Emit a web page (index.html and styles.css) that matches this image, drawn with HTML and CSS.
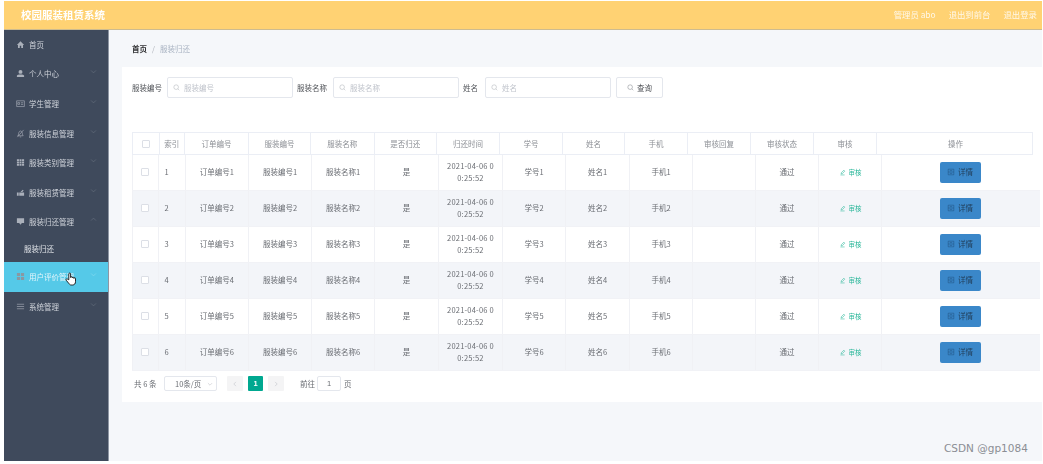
FILE: index.html
```html
<!DOCTYPE html>
<html lang="zh">
<head>
<meta charset="utf-8">
<title>校园服装租赁系统</title>
<link rel="stylesheet" href="styles.css">
</head>
<body>
<div class="app">
  <header class="topbar">
    <div class="brand">校园服装租赁系统</div>
    <div class="userlinks"><span>管理员 abo</span><span>退出到前台</span><span>退出登录</span></div>
  </header>
  <div class="shell">
    <nav class="sidebar">
      <div class="nav-item"><svg class="ni" viewBox="0 0 10 10"><path d="M5 1.5 1 5.5h1.2V9h2V6.5h1.6V9h2V5.500H9z"/></svg><span>首页</span></div>
      <div class="nav-item"><svg class="ni" viewBox="0 0 10 10"><circle cx="5" cy="3.200" r="2.200"/><path d="M1 9V7.600C1 6.500 3 6 5 6s4 .5 4 1.600V9z"/></svg><span>个人中心</span><svg class="chev" viewBox="0 0 10 10"><path d="M1.500 3.500 5 7l3.500-3.500"/></svg></div>
      <div class="nav-item"><svg class="ni line" viewBox="0 0 10 10"><path d="M.7 2h8.600v6.400H.7zM2 4h2v2H2zM5.500 4.200h2.500M5.500 6h2.500"/></svg><span>学生管理</span><svg class="chev" viewBox="0 0 10 10"><path d="M1.500 3.500 5 7l3.500-3.500"/></svg></div>
      <div class="nav-item"><svg class="ni line" viewBox="0 0 10 10"><path d="M2 7.500c1-1 .8-2.500 1.200-3.600C3.600 2.800 4.300 2.200 5 2.200s1.400.6 1.800 1.700C7.200 5 7 6.500 8 7.500zM4.200 8.800h1.600M1.500 9 8.500 1"/></svg><span>服装信息管理</span><svg class="chev" viewBox="0 0 10 10"><path d="M1.500 3.500 5 7l3.500-3.500"/></svg></div>
      <div class="nav-item"><svg class="ni" viewBox="0 0 10 10"><path d="M1 1.500h2.300v2H1zM3.900 1.500h2.200v2H3.900zM6.700 1.500H9v2H6.700zM1 4.100h2.300v2H1zM3.900 4.100h2.200v2H3.900zM6.700 4.100H9v2H6.700zM1 6.700h2.300v2H1zM3.900 6.700h2.200v2H3.900zM6.700 6.700H9v2H6.700z"/></svg><span>服装类别管理</span><svg class="chev" viewBox="0 0 10 10"><path d="M1.500 3.500 5 7l3.500-3.500"/></svg></div>
      <div class="nav-item"><svg class="ni" viewBox="0 0 10 10"><path d="M1 5h2v3.500H1zM3.600 5h5.400v3.500H3.600zM5 4.400 7.500 2l1 .8L7 4.400z"/></svg><span>服装租赁管理</span><svg class="chev" viewBox="0 0 10 10"><path d="M1.500 3.500 5 7l3.500-3.500"/></svg></div>
      <div class="nav-item"><svg class="ni" viewBox="0 0 10 10"><path d="M1 1.500h8v5.300H6.500L5 8.500 3.500 6.800H1z"/></svg><span>服装归还管理</span><svg class="chev" viewBox="0 0 10 10"><path d="M1.500 6.500 5 3l3.500 3.500"/></svg></div>
      <div class="nav-sub">服装归还</div>
      <div class="nav-item active"><svg class="ni" viewBox="0 0 10 10"><path d="M1 1h3.500v3.500H1zM5.500 1H9v3.500H5.500zM1 5.500h3.500V9H1zM5.500 5.500H9V9H5.500z"/></svg><span>用户评价管理</span><svg class="chev" viewBox="0 0 10 10"><path d="M1.500 3.500 5 7l3.500-3.500"/></svg><svg class="hand" viewBox="0 0 12 14"><path d="M3.800 7.800V2c0-1.300 1.800-1.300 1.800 0v3.500c0-1 1.700-1 1.700 0v.4c0-1 1.600-1 1.600 0v.5c0-.9 1.600-.9 1.600.1v3.200c0 1.800-1 3.300-2.800 3.300H6.200C5 13 4.500 12.400 3.800 11.400L1.200 8.200c-.7-.9.500-1.900 1.300-1.100z"/></svg></div>
      <div class="nav-item"><svg class="ni line" viewBox="0 0 10 10"><path d="M1 2.500h8M1 5h8M1 7.500h8"/></svg><span>系统管理</span><svg class="chev" viewBox="0 0 10 10"><path d="M1.500 3.500 5 7l3.500-3.500"/></svg></div>
    </nav>
    <main class="main">
      <div class="crumbs"><b>首页</b><i>/</i><span>服装归还</span></div>
      <section class="card">
        <form class="search">
          <label class="lab1">服装编号</label>
          <div class="input"><svg class="mag" viewBox="0 0 10 10"><circle cx="4.500" cy="4.500" r="3.300"/><path d="m7 7 2 2"/></svg>服装编号</div>
          <label class="lab2">服装名称</label>
          <div class="input"><svg class="mag" viewBox="0 0 10 10"><circle cx="4.500" cy="4.500" r="3.300"/><path d="m7 7 2 2"/></svg>服装名称</div>
          <label class="lab3">姓名</label>
          <div class="input"><svg class="mag" viewBox="0 0 10 10"><circle cx="4.500" cy="4.500" r="3.300"/><path d="m7 7 2 2"/></svg>姓名</div>
          <div class="query"><svg class="mag" viewBox="0 0 10 10"><circle cx="4.500" cy="4.500" r="3.300"/><path d="m7 7 2 2"/></svg>查询</div>
        </form>
        <div class="thead">
          <div class="c"><em class="check"></em></div><div class="c">索引</div><div class="c">订单编号</div><div class="c">服装编号</div><div class="c">服装名称</div><div class="c">是否归还</div><div class="c">归还时间</div><div class="c">学号</div><div class="c">姓名</div><div class="c">手机</div><div class="c">审核回复</div><div class="c">审核状态</div><div class="c">审核</div><div class="c">操作</div>
        </div>
        <div class="tbody" id="rows">
          <div class="row"><div class="c"><em class="check"></em></div><div class="c idx">1</div><div class="c">订单编号1</div><div class="c">服装编号1</div><div class="c">服装名称1</div><div class="c">是</div><div class="c time">2021-04-06 0<br>0:25:52</div><div class="c">学号1</div><div class="c">姓名1</div><div class="c">手机1</div><div class="c"></div><div class="c">通过</div><div class="c audit"><svg class="pen" viewBox="0 0 10 10"><path d="M2 8.500h6M3 7l.4-1.800L7 1.700l1.300 1.300L4.800 6.600z"/></svg>审核</div><div class="c"><div class="detail"><svg class="doc" viewBox="0 0 10 10"><path d="M1.500 1.500h7v7h-7zM1.500 5h7M3.500 3.200h3M3.500 6.800h3"/></svg>详情</div></div></div>
          <div class="row"><div class="c"><em class="check"></em></div><div class="c idx">2</div><div class="c">订单编号2</div><div class="c">服装编号2</div><div class="c">服装名称2</div><div class="c">是</div><div class="c time">2021-04-06 0<br>0:25:52</div><div class="c">学号2</div><div class="c">姓名2</div><div class="c">手机2</div><div class="c"></div><div class="c">通过</div><div class="c audit"><svg class="pen" viewBox="0 0 10 10"><path d="M2 8.500h6M3 7l.4-1.800L7 1.700l1.300 1.300L4.800 6.600z"/></svg>审核</div><div class="c"><div class="detail"><svg class="doc" viewBox="0 0 10 10"><path d="M1.500 1.500h7v7h-7zM1.500 5h7M3.500 3.200h3M3.500 6.800h3"/></svg>详情</div></div></div>
          <div class="row"><div class="c"><em class="check"></em></div><div class="c idx">3</div><div class="c">订单编号3</div><div class="c">服装编号3</div><div class="c">服装名称3</div><div class="c">是</div><div class="c time">2021-04-06 0<br>0:25:52</div><div class="c">学号3</div><div class="c">姓名3</div><div class="c">手机3</div><div class="c"></div><div class="c">通过</div><div class="c audit"><svg class="pen" viewBox="0 0 10 10"><path d="M2 8.500h6M3 7l.4-1.800L7 1.700l1.300 1.300L4.800 6.600z"/></svg>审核</div><div class="c"><div class="detail"><svg class="doc" viewBox="0 0 10 10"><path d="M1.500 1.500h7v7h-7zM1.500 5h7M3.500 3.200h3M3.500 6.800h3"/></svg>详情</div></div></div>
          <div class="row"><div class="c"><em class="check"></em></div><div class="c idx">4</div><div class="c">订单编号4</div><div class="c">服装编号4</div><div class="c">服装名称4</div><div class="c">是</div><div class="c time">2021-04-06 0<br>0:25:52</div><div class="c">学号4</div><div class="c">姓名4</div><div class="c">手机4</div><div class="c"></div><div class="c">通过</div><div class="c audit"><svg class="pen" viewBox="0 0 10 10"><path d="M2 8.500h6M3 7l.4-1.800L7 1.700l1.300 1.300L4.800 6.600z"/></svg>审核</div><div class="c"><div class="detail"><svg class="doc" viewBox="0 0 10 10"><path d="M1.500 1.500h7v7h-7zM1.500 5h7M3.500 3.200h3M3.500 6.800h3"/></svg>详情</div></div></div>
          <div class="row"><div class="c"><em class="check"></em></div><div class="c idx">5</div><div class="c">订单编号5</div><div class="c">服装编号5</div><div class="c">服装名称5</div><div class="c">是</div><div class="c time">2021-04-06 0<br>0:25:52</div><div class="c">学号5</div><div class="c">姓名5</div><div class="c">手机5</div><div class="c"></div><div class="c">通过</div><div class="c audit"><svg class="pen" viewBox="0 0 10 10"><path d="M2 8.500h6M3 7l.4-1.800L7 1.700l1.300 1.300L4.800 6.600z"/></svg>审核</div><div class="c"><div class="detail"><svg class="doc" viewBox="0 0 10 10"><path d="M1.500 1.500h7v7h-7zM1.500 5h7M3.500 3.200h3M3.500 6.800h3"/></svg>详情</div></div></div>
          <div class="row"><div class="c"><em class="check"></em></div><div class="c idx">6</div><div class="c">订单编号6</div><div class="c">服装编号6</div><div class="c">服装名称6</div><div class="c">是</div><div class="c time">2021-04-06 0<br>0:25:52</div><div class="c">学号6</div><div class="c">姓名6</div><div class="c">手机6</div><div class="c"></div><div class="c">通过</div><div class="c audit"><svg class="pen" viewBox="0 0 10 10"><path d="M2 8.500h6M3 7l.4-1.800L7 1.700l1.300 1.300L4.800 6.600z"/></svg>审核</div><div class="c"><div class="detail"><svg class="doc" viewBox="0 0 10 10"><path d="M1.500 1.500h7v7h-7zM1.500 5h7M3.500 3.200h3M3.500 6.800h3"/></svg>详情</div></div></div>
        </div>
        <div class="pager">
          <span class="total">共 6 条</span>
          <div class="size">10条/页<svg class="chev2" viewBox="0 0 10 10"><path d="M1.500 3.500 5 7l3.500-3.500"/></svg></div>
          <div class="pbtn"><svg class="chev2" viewBox="0 0 10 10"><path d="M6.500 1.500 3 5l3.500 3.500"/></svg></div>
          <div class="pnum">1</div>
          <div class="pbtn"><svg class="chev2" viewBox="0 0 10 10"><path d="M3.500 1.500 7 5 3.500 8.500"/></svg></div>
          <span class="goto">前往</span><div class="jump">1</div><span>页</span>
        </div>
      </section>
    </main>
  </div>
</div>
<div class="mark">CSDN @gp1084</div>
</body>
</html>
```

FILE: styles.css
```css
* { box-sizing: border-box; }
html, body { margin: 0; height: 464px; overflow: hidden; background: #fff; }
body {
  position: relative;
  font-family: "Noto Sans CJK SC", "Liberation Sans", sans-serif;
  font-size: 7.5px;
  color: #606266;
}
.app {
  margin: 1px 1px 0 4px;
  height: 460px;
  display: flex;
  flex-direction: column;
  background: #f5f7fa;
  filter: blur(0.55px);
}
.topbar {
  height: 29px;
  flex: none;
  display: flex;
  align-items: center;
  justify-content: space-between;
  background: #ffd273;
  border-bottom: 1px solid #cdbb8f;
  padding: 0 5px 2px 17px;
  color: #fff;
}
.brand { font-size: 10.500px; font-weight: 700; }
.userlinks { display: flex; gap: 13px; font-size: 8.400px; opacity: .85; }
.shell { flex: 1; display: flex; min-height: 0; }
.sidebar {
  width: 105px;
  flex: none;
  background: #3f4a5c;
  border-right: 1px solid #8e96a3;
  color: #cfd3da;
}
.nav-item {
  position: relative;
  height: 29.600px;
  display: flex;
  align-items: center;
  padding: 0 0 1px 12px;
}
.nav-item span { margin-left: 4px; flex: 1; }
.ni { width: 9px; height: 9px; fill: #aab0ba; flex: none; }
.ni.line { fill: none; stroke: #aab0ba; stroke-width: .7; }
.chev { width: 7px; height: 7px; fill: none; stroke: #6b7483; stroke-width: .8; margin-right: 11px; margin-top: -4px; }
.nav-sub { height: 25px; display: flex; align-items: center; padding: 0 0 3px 20px; color: #dfe2e7; }
.active { background: #55c9e8; color: #e5f6fb; }
.active .chev { stroke: #8fdcf1; }
.active .ni { fill: #8a98a2; }
.hand {
  position: absolute;
  left: 61px;
  top: 10px;
  width: 12px;
  height: 14px;
  fill: #fff;
  stroke: #111;
  stroke-width: .9;
}
.main { flex: 1; padding: 0 0 0 13px; min-width: 0; }
.crumbs {
  height: 37px;
  display: flex;
  align-items: center;
  padding: 0 0 1px 10px;
  color: #a9b3c2;
}
.crumbs b { color: #303133; font-weight: 700; }
.crumbs i { margin: 0 5px; font-style: normal; color: #b0b4bb; }
.card {
  height: 335px;
  background: #fff;
  padding: 10px 0 0 10px;
}
.search { display: flex; align-items: center; height: 21px; color: #505358; }
.lab1 { width: 35px; }
.lab2 { width: 36px; margin-left: 4px; }
.lab3 { width: 22px; margin-left: 4px; }
.input {
  width: 126px;
  height: 21px;
  display: flex;
  align-items: center;
  padding-left: 5px;
  border: 1px solid #e4e7ed;
  border-radius: 2px;
  color: #c0c4cc;
}
.mag { width: 7px; height: 7px; fill: none; stroke: #a8acb3; stroke-width: .7; margin-right: 4px; flex: none; }
.query {
  width: 47px;
  height: 21px;
  margin-left: 5px;
  display: flex;
  align-items: center;
  justify-content: center;
  border: 1px solid #e4e7ed;
  border-radius: 2px;
  color: #505358;
}
.query .mag { margin-right: 3px; stroke: #7a7d83; }
.thead, .row { display: grid; }
.thead {
  margin-top: 34px;
  width: 901px;
  height: 23px;
  grid-template-columns: 26.500px 25.500px 64px 62px 63.500px 62.500px 63px 63px 62px 63px 63px 63px 63px 157px;
  border: 1px solid #ebeef5;
  color: #8c8f95;
}
.tbody { width: 908px; }
.row {
  height: 36px;
  grid-template-columns: 26.500px 27px 63.500px 63px 63px 64px 64px 63px 64px 63px 63px 63px 63px 1fr;
  border-bottom: 1px solid #f1f2f6;
}
.row:nth-child(even) { background: #f3f5f9; }
.c {
  display: flex;
  align-items: center;
  justify-content: center;
  text-align: center;
  border-right: 1px solid #f0f1f5;
  line-height: 12px;
}
.row .c { padding-bottom: 1px; }
.thead .c:last-child, .row .c:last-child { border-right: 0; }
.thead .c { border-right-color: #ebeef5; }
.row .c:first-child { border-left: 1px solid #f0f1f5; }
.row { color: #6a6d73; }
.row .time { letter-spacing: .22px; }
.row .idx { justify-content: flex-start; padding-left: 6px; }
.check {
  display: block;
  width: 8px;
  height: 8px;
  border: 1px solid #dcdfe6;
  border-radius: 1px;
  background: #fff;
}
.audit { color: #2bb79a; font-size: 6.500px; }
.pen { width: 7px; height: 7px; fill: none; stroke: #2bb79a; stroke-width: .8; margin-right: 3px; }
.detail {
  width: 41px;
  height: 21px;
  margin-left: -2px;
  display: flex;
  align-items: center;
  justify-content: center;
  background: #3a87c9;
  border-radius: 2px;
  color: #22405c;
}
.doc { width: 8px; height: 8px; fill: none; stroke: #1f4f7d; stroke-width: .6; margin-right: 3px; }
.pager { display: flex; align-items: center; height: 15px; margin-top: 5px; padding-left: 2px; color: #6a6d73; }
.total { width: 30px; }
.size {
  width: 53px;
  height: 15px;
  display: flex;
  align-items: center;
  justify-content: space-between;
  padding: 0 3px 0 10px;
  border: 1px solid #e4e7ed;
  border-radius: 2px;
}
.chev2 { width: 6px; height: 6px; fill: none; stroke: #b5b8be; stroke-width: .8; }
.pbtn, .pnum { width: 16px; height: 15px; display: flex; align-items: center; justify-content: center; border-radius: 1px; }
.pbtn { background: #f4f4f5; }
.size + .pbtn { margin-left: 10px; }
.pnum { margin: 0 5px; width: 15px; background: #00a890; color: #fff; font-weight: 700; font-family: "Liberation Sans", sans-serif; }
.goto { margin: 0 2px 0 16px; }
.jump {
  width: 24px;
  height: 15px;
  margin-right: 3px;
  display: flex;
  align-items: center;
  justify-content: center;
  border: 1px solid #e4e7ed;
  border-radius: 2px;
  font-family: "Liberation Sans", sans-serif;
}
.mark {
  position: absolute;
  left: 944px;
  top: 441px;
  font-family: "DejaVu Sans", sans-serif;
  font-size: 10.500px;
  line-height: 14px;
  color: #8b8e94;
}
```
